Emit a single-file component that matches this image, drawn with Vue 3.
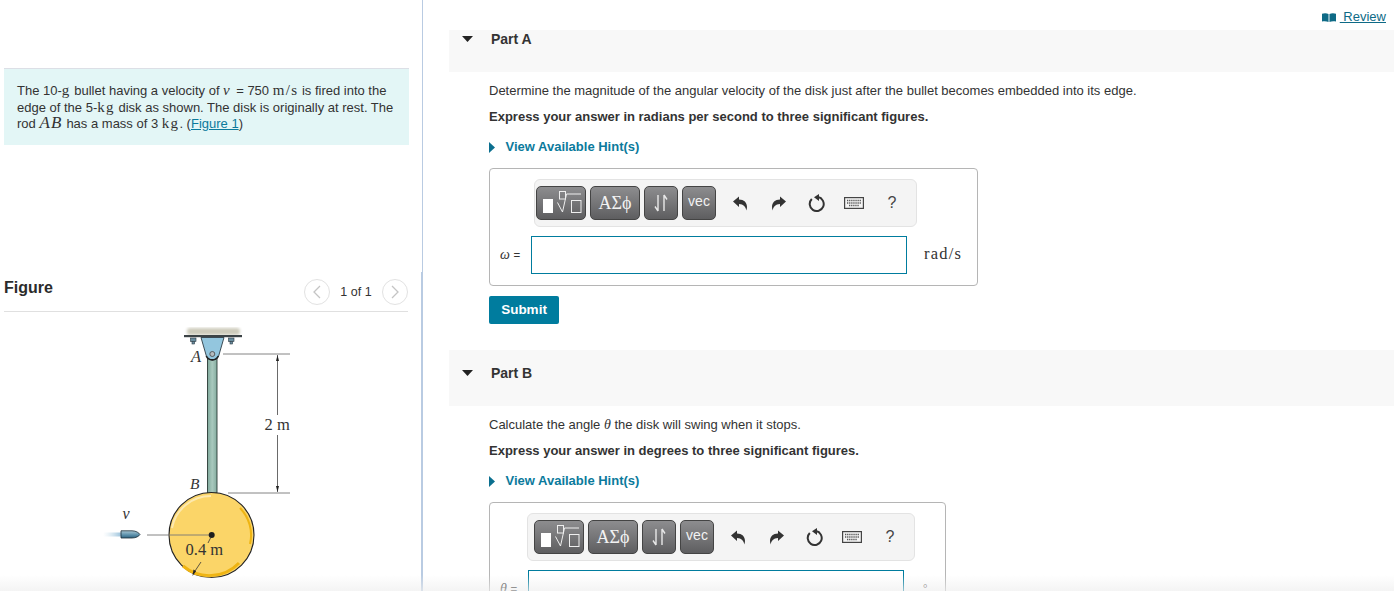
<script setup>
const parts = [
  {
    id: 'a', title: 'Part A',
    question: 'Determine the magnitude of the angular velocity of the disk just after the bullet becomes embedded into its edge.',
    hint: 'Express your answer in radians per second to three significant figures.',
    symbol: 'ω', unit: 'rad/s', width: 489, labelWidth: 41, toolbarLeft: 44, toolbarWidth: 383, toolbarPad: 1, unitGap: 17, submit: true
  },
  {
    id: 'b', title: 'Part B',
    question: null,
    hint: 'Express your answer in degrees to three significant figures.',
    symbol: 'θ', unit: '°', width: 457, labelWidth: 38, toolbarLeft: 37, toolbarWidth: 388, toolbarPad: 6, unitGap: 19, submit: false
  }
]
</script>

<template>
  <div class="page">
    <aside class="left">
      <section class="problem">
        The 10-<span class="m">g</span> bullet having a velocity of <span class="m i v">v</span> = 750 <span class="m">m/s</span> is fired into the edge of the 5-<span class="m">kg</span> disk as shown. The disk is originally at rest. The rod <span class="m i big">AB</span> has a mass of 3 <span class="m">kg</span>. (<a class="link">Figure 1</a>)
      </section>

      <div class="fig-head">
        <h2>Figure</h2>
        <div class="pager">
          <span class="circle"><svg width="8" height="14" viewBox="0 0 8 14"><path d="M7 1 1 7l6 6" fill="none" stroke="#c4c4c4" stroke-width="1.3"/></svg></span>
          <span class="count">1 of 1</span>
          <span class="circle"><svg width="8" height="14" viewBox="0 0 8 14"><path d="M1 1l6 6-6 6" fill="none" stroke="#c4c4c4" stroke-width="1.3"/></svg></span>
        </div>
      </div>

      <svg class="figure" width="220" height="271" viewBox="90 320 220 271">
        <defs>
          <linearGradient id="trail" x1="0" x2="1"><stop offset="0" stop-color="#cfe3ee" stop-opacity="0"/><stop offset="1" stop-color="#9cc3dc"/></linearGradient>
          <linearGradient id="bul" x1="0" x2="0" y1="0" y2="1"><stop offset="0" stop-color="#a9c6d3"/><stop offset=".55" stop-color="#5f93ad"/><stop offset="1" stop-color="#2f6480"/></linearGradient>
          <linearGradient id="rod" x1="0" x2="1"><stop offset="0" stop-color="#7fa99b"/><stop offset=".5" stop-color="#a9c9be"/><stop offset="1" stop-color="#84ac9f"/></linearGradient>
          <filter id="soft"><feGaussianBlur stdDeviation="1.8"/></filter>
        </defs>
        <rect x="187" y="328" width="53" height="7" rx="3" fill="#cdcbbb" filter="url(#soft)"/>
        <rect x="184" y="335" width="58" height="2.2" fill="#3c4346"/>
        <g fill="#6a8ea0" stroke="#2c3b44" stroke-width=".6">
          <rect x="190.500" y="338" width="5.500" height="3.500"/><rect x="228.500" y="338" width="5.500" height="3.500"/>
          <rect x="192" y="341.500" width="2.600" height="2.500"/><rect x="230" y="341.500" width="2.600" height="2.500"/>
        </g>
        <rect x="207.500" y="358" width="9.500" height="135" fill="url(#rod)" stroke="#2b3a36" stroke-width=".9"/>
        <path d="M201 337.500h23l-5.500 19a6.800 6.800 0 0 1-12 0z" fill="#93c6de" stroke="#2c3b44" stroke-width=".9"/>
        <path d="M206.300 356a6.600 6.600 0 0 0 12 0" fill="none" stroke="#222" stroke-width="1.700"/>
        <circle cx="212.300" cy="354" r="2.500" fill="#b4bcc0" stroke="#444" stroke-width=".8"/>

        <path d="M223 354h67M228 493h62" stroke="#777" stroke-width=".9" fill="none"/>
        <path d="M277.500 355v60M277.500 435v57" stroke="#444" stroke-width=".8" fill="none"/>
        <path d="M277.500 355l-1.500 6h3zM277.500 492l-1.500-6h3z" fill="#222"/>

        <circle cx="211.500" cy="535" r="42.500" fill="#fbd568" stroke="#222" stroke-width="1.100"/>
        <path d="M183 566a41 41 0 0 0 56 -3" fill="none" stroke="#efb412" stroke-width="3"/>
        <path d="M240 508a38.500 38.500 0 0 1 10 36" fill="none" stroke="#efb412" stroke-width="2"/>
        <path d="M172 528a39.500 39.500 0 0 1 39-32" fill="none" stroke="#fde9ae" stroke-width="2"/>
        <path d="M147 535h64" stroke="#777" stroke-width=".9" fill="none"/>
        <circle cx="211.700" cy="535" r="3" fill="#1e1e1e"/>
        <path d="M211 537l-3 6M201 562l-8 12" stroke="#333" stroke-width=".8" fill="none"/>
        <path d="M192.500 576l1-6.500 2.600 1.700z" fill="#222"/>

        <rect x="103" y="532.500" width="18" height="4" fill="url(#trail)"/>
        <path d="M121 530.800h11c4 0 7 2 8 3.700-1 1.700-4 3.500-8 3.500h-11z" fill="url(#bul)" stroke="#1e2e38" stroke-width=".8"/>

        <g class="lbl">
          <text x="191" y="362" class="it" font-size="16.500">A</text>
          <text x="190" y="489" class="it" font-size="15.500">B</text>
          <text x="122.500" y="519" class="it" font-size="16">v</text>
          <text x="264.500" y="430" font-size="16.500">2 m</text>
          <text x="185.500" y="555" font-size="16.500">0.4 m</text>
        </g>
      </svg>
    </aside>

    <main class="right">
      <div class="topbar">
        <a class="review">
          <svg width="14" height="9" viewBox="0 0 15 9" preserveAspectRatio="none"><path d="M0 .8C2 0 5 0 7 1v8C5 8 2 8 0 8.500zM8 1c2-1 5-1 7-.2v7.700C13 8 10 8 8 9z" fill="#0e6a86"/></svg>
          <span>&nbsp;Review</span>
        </a>
      </div>

      <section v-for="p in parts" :key="p.id" class="part" :class="'part-' + p.id">
        <header class="part-head">
          <svg class="caret" width="11" height="6" viewBox="0 0 11 6"><path d="M0 0h11L5.500 6z" fill="#222"/></svg>
          <h3>{{ p.title }}</h3>
        </header>
        <div class="part-body">
          <p class="q" v-if="p.question">{{ p.question }}</p>
          <p class="q" v-else>Calculate the angle <span class="m i">θ</span> the disk will swing when it stops.</p>
          <p class="instr">{{ p.hint }}</p>
          <a class="hints"><svg width="6" height="11" viewBox="0 0 6 11"><path d="M0 0l6 5.500L0 11z" fill="#0b6f8f"/></svg>View Available Hint(s)</a>

          <div class="answer" :style="{ width: p.width + 'px' }">
            <div class="toolbar" :style="{ marginLeft: p.toolbarLeft + 'px', width: p.toolbarWidth + 'px', paddingLeft: p.toolbarPad + 'px' }">
              <button class="tb w50">
                <svg width="44" height="26" viewBox="0 0 44 26">
                  <rect x="4" y="9" width="10" height="14" fill="#fff"/>
                  <rect x="20.500" y="1.500" width="6" height="7.500" fill="none" stroke="#eee"/>
                  <path d="M18.500 12.500l5 9.500 4-18h14.500" fill="none" stroke="#eee" stroke-width="1"/>
                  <rect x="32.500" y="10.500" width="9.500" height="12" fill="none" stroke="#eee"/>
                </svg>
              </button>
              <button class="tb w50 greek">ΑΣϕ</button>
              <button class="tb w34">
                <svg width="16" height="20" viewBox="0 0 16 20"><path d="M5 2v16M5 18l-3-4.500M11 18V2M11 2l3 4.500" fill="none" stroke="#e8e8e8" stroke-width="1.400"/></svg>
              </button>
              <button class="tb w34 vec">vec</button>
              <div class="tools">
                <span class="tool"><svg width="15" height="15" viewBox="0 0 15 15"><path d="M0 5.500L6 .5v3c5 0 8 3 8 7.500 0 1.300-.3 2.500-.7 3.500-.4-3.500-2.800-6.500-7.300-6.500v3z" fill="#333"/></svg></span>
                <span class="tool"><svg width="15" height="15" viewBox="0 0 15 15"><path d="M15 5.500L9 .5v3c-5 0-8 3-8 7.500 0 1.300.3 2.500.7 3.500C2.100 11 4.500 8 9 8v3z" fill="#333"/></svg></span>
                <span class="tool"><svg width="17" height="18" viewBox="0 0 17 18"><path d="M3.800 5a7 7 0 1 0 6.200-1.900" fill="none" stroke="#333" stroke-width="2"/><path d="M6 3.300 11 0v7z" fill="#333"/></svg></span>
                <span class="tool"><svg width="20" height="12" viewBox="0 0 20 12"><rect x=".6" y=".6" width="18.800" height="10.800" fill="#f4f4f4" stroke="#444" stroke-width="1.200"/><path d="M3 3.500h14M3 6h14M5 8.500h10" stroke="#555" stroke-width="1.300" stroke-dasharray="1.300 .8"/></svg></span>
                <span class="tool q-mark">?</span>
              </div>
            </div>
            <div class="row">
              <span class="label" :style="{ width: p.labelWidth + 'px' }"><span class="m i sym">{{ p.symbol }}</span> =</span>
              <div class="input"></div>
              <span class="unit" :style="{ marginLeft: p.unitGap + 'px' }">{{ p.unit }}</span>
            </div>
          </div>

          <button v-if="p.submit" class="submit">Submit</button>
        </div>
      </section>
    </main>
    <div class="fade"></div>
  </div>
</template>

<style>
html, body { margin: 0; background: #fff; }
</style>

<style scoped>
.page { display: flex; width: 1394px; height: 591px; overflow: hidden; position: relative; font-family: "Liberation Sans", Arial, sans-serif; font-size: 13px; color: #333; }
.left { width: 423px; flex: none; height: 591px; box-sizing: border-box; border-right: 1px solid #b9cbe2; padding: 68px 14px 0 4px; position: relative; }
.left::after { content: ""; position: absolute; right: 0; top: 272px; bottom: 0; width: 1px; background: #b9cbe2; }
.problem { box-sizing: content-box; width: 379px; padding: 14px 13px 0 13px; height: 62px; background: #e3f6f6; border-top: 1px solid #dcdfe6; line-height: 16.500px; }
.m { font-family: "Liberation Serif", "DejaVu Serif", serif; font-size: 15px; letter-spacing: 1.300px; line-height: 0; }
.i { font-style: italic; }
.v { margin-right: 1.500px; }
.big { font-size: 17px; letter-spacing: 1.300px; }
.link { color: #0b7a9c; text-decoration: underline; }
.fig-head { display: flex; justify-content: space-between; align-items: center; height: 45px; margin-top: 121px; border-bottom: 1px solid #e0e0e0; }
.fig-head h2 { margin: -2px 0 0; font-size: 16px; font-weight: 700; color: #2b2b2b; }
.pager { display: flex; align-items: center; margin-top: 6px; }
.circle { width: 24px; height: 24px; border: 1px solid #e2e2e2; border-radius: 50%; display: flex; align-items: center; justify-content: center; }
.count { width: 52px; text-align: center; font-size: 12.500px; color: #333; }
.figure { display: block; margin: 8px 0 0 86px; }
.lbl text { font-family: "Liberation Serif", serif; fill: #333; }
.lbl .it { font-style: italic; }

.right { flex: 1; min-width: 0; padding-left: 26px; }
.topbar { height: 30px; display: flex; justify-content: flex-end; align-items: flex-start; padding: 10px 8px 0 0; box-sizing: border-box; }
.review { display: flex; align-items: center; gap: 4px; color: #0e6a86; font-size: 13px; line-height: 14px; }
.review span { text-decoration: underline; }
.part-head { display: flex; align-items: flex-start; background: #f8f8f8; position: relative; height: 42px; padding-left: 42px; box-sizing: border-box; }
.part-b .part-head { height: 56px; padding-top: 16px; margin-top: 26px; }
.part-a .part-head { padding-top: 2px; }
.part-head h3 { margin: 0; font-size: 14px; line-height: 15px; font-weight: 700; color: #333; }
.caret { position: absolute; left: 13px; top: 6px; }
.part-b .caret { top: 20px; }
.part-body { padding: 11px 0 0 40px; }
.q { margin: 0; line-height: 16px; font-size: 13px; }
.q .m { font-size: 14px; letter-spacing: 0; }
.instr { margin: 10px 0 0; font-weight: 700; font-size: 13px; line-height: 16px; }
.hints { display: flex; align-items: center; gap: 10.500px; margin-top: 14px; color: #0b7a9c; font-weight: 700; line-height: 16px; font-size: 13px; }
.answer { margin-top: 13px; height: 118px; box-sizing: border-box; border: 1px solid #b5b5b5; border-radius: 4px; padding-top: 10px; background: #fff; }
.toolbar { box-sizing: border-box; height: 48px; background: #f4f4f4; border: 1px solid #e3e3e3; border-radius: 6px; display: flex; align-items: center; gap: 4px; }
.tb { box-sizing: border-box; height: 34px; padding: 0; border: 1px solid #444; border-radius: 5px; background: linear-gradient(#8d8d8f, #5e5e60); color: #f2f2f2; display: flex; align-items: center; justify-content: center; font-family: "Liberation Sans", sans-serif; }
.w50 { width: 50px; }
.w34 { width: 34px; }
.greek { font-family: "Liberation Serif", serif; font-size: 18px; }
.vec { font-size: 14px; padding-bottom: 4px; }
.tools { display: flex; align-items: center; margin-left: 1px; }
.tool { width: 38px; flex: none; display: flex; align-items: center; justify-content: center; }
.q-mark { font-size: 16px; color: #444; }
.row { display: flex; align-items: center; margin-top: 9px; }
.label { box-sizing: border-box; padding-left: 10px; font-size: 11.500px; white-space: nowrap; flex: none; }
.sym { font-size: 14px; letter-spacing: .5px; }
.input { width: 376px; height: 38px; box-sizing: border-box; border: 1px solid #007c9e; background: #fff; flex: none; }
.unit { font-family: "Liberation Serif", serif; font-size: 16.500px; letter-spacing: 1.200px; margin-top: -2px; color: #333; }
.part-b .unit { font-size: 11px; color: #444; }
.submit { display: block; margin-top: 10px; width: 70px; height: 28px; border: 0; border-radius: 2px; background: #007c9e; color: #fff; font: 700 13.500px "Liberation Sans", sans-serif; padding: 0 0 2px; }
.fade { position: absolute; left: 0; right: 0; bottom: 0; height: 16px; background: linear-gradient(rgba(238,238,238,0), rgba(238,238,238,.65)); pointer-events: none; }
</style>
